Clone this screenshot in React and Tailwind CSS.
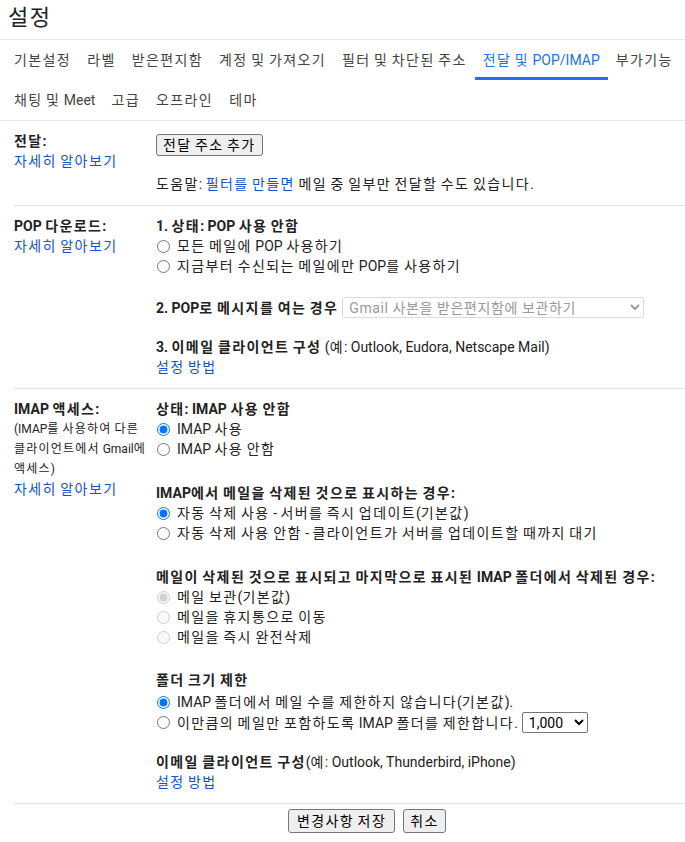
import { useState } from 'react';

const font = { fontFamily: 'Roboto, "Noto Sans CJK KR", sans-serif' };

// Hangul runs get a little extra spacing so they take the width of the reference's Korean font
const ko = (s) =>
  s.split(/([\uAC00-\uD7A3]+)/).map((part, i) =>
    /[\uAC00-\uD7A3]/.test(part) ? <span key={i} className="tracking-[0.1em]">{part}</span> : part
  );

const tabsTop = ['기본설정', '라벨', '받은편지함', '계정 및 가져오기', '필터 및 차단된 주소', '전달 및 POP/IMAP', '부가기능'];
const tabsBottom = ['채팅 및 Meet', '고급', '오프라인', '테마'];

function Tab({ label, active }) {
  return (
    <div
      className={`h-[40px] px-2 flex items-center text-[14px] border-b-[3px] pt-[3px] ${
        active ? 'text-[#1a73e8] border-[#1a73e8]' : 'text-[#444] border-transparent'
      }`}
    >
      <span>{ko(label)}</span>
    </div>
  );
}

function Radio({ name, checked, disabled, onChange, children }) {
  return (
    <label className="flex items-center h-[20px] text-[#222]">
      <input
        type="radio"
        name={name}
        checked={checked}
        disabled={disabled}
        onChange={onChange}
        className="m-0 ml-px mr-[7px] w-[13px] h-[13px]"
      />
      <span>{ko(children)}</span>
    </label>
  );
}

function Link({ children }) {
  return <div className="text-[#1155cc] leading-[20px]">{ko(children)}</div>;
}

function Section({ left, children }) {
  return (
    <div className="flex border-b border-[#e0e0e0] pt-[10px] pb-[11px]">
      <div className="w-[142px] shrink-0">{left}</div>
      <div className="flex-1">{children}</div>
    </div>
  );
}

export default function App() {
  const [pop, setPop] = useState('');
  const [imap, setImap] = useState('on');
  const [expunge, setExpunge] = useState('auto');
  const [limit, setLimit] = useState('none');

  return (
    <div className="w-[685px] bg-white text-[14px] leading-[20px] text-[#222]" style={font}>
      <div className="h-[40px] pl-[8px] pt-[3px] text-[22px] leading-[30px] text-[#222] border-b border-[#e8e8e8]">
        <span className="tracking-[1.5px]">설정</span>
      </div>

      {/* Tabs */}
      <div className="border-b border-[#e8e8e8] pl-[6px]">
        <div className="flex">
          {tabsTop.map(t => <Tab key={t} label={t} active={t === '전달 및 POP/IMAP'} />)}
        </div>
        <div className="flex">
          {tabsBottom.map(t => <Tab key={t} label={t} />)}
        </div>
      </div>

      <div className="ml-[14px]">
        {/* 전달 */}
        <Section
          left={<><div className="font-bold">{ko('전달:')}</div><Link>자세히 알아보기</Link></>}
        >
          <button className="mt-[3px] h-[22px] px-[6px] bg-[#efefef] border border-[#767676] rounded-[3px] text-[14px] leading-[18px] text-black">
            {ko('전달 주소 추가')}
          </button>
          <div className="mt-[18px]">
            {ko('도움말: ')}<span className="text-[#1155cc]">{ko('필터를 만들면')}</span>{ko(' 메일 중 일부만 전달할 수도 있습니다.')}
          </div>
        </Section>

        {/* POP */}
        <Section
          left={<><div className="font-bold">{ko('POP 다운로드:')}</div><Link>자세히 알아보기</Link></>}
        >
          <div className="font-bold">{ko('1. 상태: POP 사용 안함')}</div>
          <Radio name="pop" checked={pop === 'all'} onChange={() => setPop('all')}>모든 메일에 POP 사용하기</Radio>
          <Radio name="pop" checked={pop === 'now'} onChange={() => setPop('now')}>지금부터 수신되는 메일에만 POP를 사용하기</Radio>
          <div className="flex items-center mt-[21px] h-[21px]">
            <span className="font-bold mr-[4px]">{ko('2. POP로 메시지를 여는 경우')}</span>
            <select disabled className="w-[302px] h-[21px] border border-[#dcdcdc] rounded-[2px] text-[#999] text-[14px] pl-[2px] tracking-[0.6px]">
              <option>Gmail 사본을 받은편지함에 보관하기</option>
            </select>
          </div>
          <div className="mt-[19px]">
            <span className="font-bold">{ko('3. 이메일 클라이언트 구성')}</span>{ko(' (예: Outlook, Eudora, Netscape Mail)')}
          </div>
          <Link>설정 방법</Link>
        </Section>

        {/* IMAP */}
        <Section
          left={
            <>
              <div className="font-bold">{ko('IMAP 액세스:')}</div>
              <div className="text-[12px] leading-[20px] text-[#222]">
                {ko('(IMAP를 사용하여 다른')}<br />{ko('클라이언트에서 Gmail에')}<br />{ko('액세스)')}
              </div>
              <Link>자세히 알아보기</Link>
            </>
          }
        >
          <div className="font-bold">{ko('상태: IMAP 사용 안함')}</div>
          <Radio name="imap" checked={imap === 'on'} onChange={() => setImap('on')}>IMAP 사용</Radio>
          <Radio name="imap" checked={imap === 'off'} onChange={() => setImap('off')}>IMAP 사용 안함</Radio>

          <div className="font-bold mt-[24px]">{ko('IMAP에서 메일을 삭제된 것으로 표시하는 경우:')}</div>
          <Radio name="exp" checked={expunge === 'auto'} onChange={() => setExpunge('auto')}>자동 삭제 사용 - 서버를 즉시 업데이트(기본값)</Radio>
          <Radio name="exp" checked={expunge === 'manual'} onChange={() => setExpunge('manual')}>자동 삭제 사용 안함 - 클라이언트가 서버를 업데이트할 때까지 대기</Radio>

          <div className="font-bold mt-[24px]">{ko('메일이 삭제된 것으로 표시되고 마지막으로 표시된 IMAP 폴더에서 삭제된 경우:')}</div>
          <Radio name="del" checked disabled onChange={() => {}}>메일 보관(기본값)</Radio>
          <Radio name="del" disabled>메일을 휴지통으로 이동</Radio>
          <Radio name="del" disabled>메일을 즉시 완전삭제</Radio>

          <div className="font-bold mt-[23px]">{ko('폴더 크기 제한')}</div>
          <div className="mt-[2px]">
            <Radio name="lim" checked={limit === 'none'} onChange={() => setLimit('none')}>IMAP 폴더에서 메일 수를 제한하지 않습니다(기본값).</Radio>
          </div>
          <label className="flex items-center h-[21px]">
            <input
              type="radio"
              name="lim"
              checked={limit === 'some'}
              onChange={() => setLimit('some')}
              className="m-0 ml-px mr-[7px] w-[13px] h-[13px]"
            />
            <span className="mr-[4px]">{ko('이만큼의 메일만 포함하도록 IMAP 폴더를 제한합니다.')}</span>
            <select className="w-[66px] h-[21px] border border-[#767676] rounded-[2px] text-[14px] text-black pl-[2px]">
              <option>1,000</option>
              <option>2,000</option>
              <option>5,000</option>
              <option>10,000</option>
            </select>
          </label>

          <div className="mt-[19px]">
            <span className="font-bold">{ko('이메일 클라이언트 구성')}</span>{ko('(예: Outlook, Thunderbird, iPhone)')}
          </div>
          <Link>설정 방법</Link>
        </Section>

        {/* Save */}
        <div className="flex gap-[8px] pl-[274px] pt-[5px]">
          <button className="h-[24px] px-[8px] bg-[#efefef] border border-[#767676] rounded-[3px] text-[14px] leading-[20px] text-black">
            {ko('변경사항 저장')}
          </button>
          <button className="h-[24px] px-[6px] bg-[#efefef] border border-[#767676] rounded-[3px] text-[14px] leading-[20px] text-black">
            {ko('취소')}
          </button>
        </div>
        <div className="h-[10px]" />
      </div>
    </div>
  );
}
